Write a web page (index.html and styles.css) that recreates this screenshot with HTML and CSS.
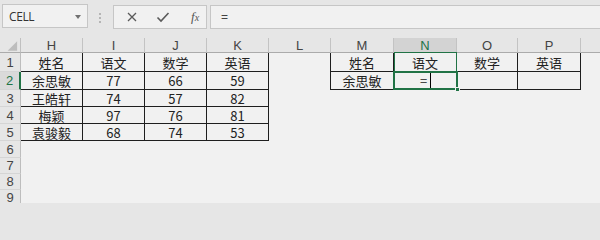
FILE: index.html
```html
<!DOCTYPE html>
<html lang="zh">
<head>
<meta charset="utf-8">
<title>Sheet</title>
<link rel="stylesheet" href="styles.css">
</head>
<body>
<div class="toolbar">
  <div class="namebox"><span class="nb-text">CELL</span><span class="nb-arrow"></span></div>
  <div class="sep"><span></span><span></span><span></span></div>
  <div class="fxbox">
    <svg class="ico" width="12" height="12" viewBox="0 0 12 12"><path d="M2 2 L10 10 M10 2 L2 10" stroke="#5a5a5a" stroke-width="1.3" fill="none"/></svg>
    <svg class="ico" width="14" height="12" viewBox="0 0 14 12"><path d="M1.5 6.5 L5 10 L12.5 2" stroke="#5a5a5a" stroke-width="1.6" fill="none"/></svg>
    <span class="fx"><i>f</i><i class="x">x</i></span>
  </div>
  <div class="formula"><span class="ftext">=</span></div>
</div>
<div class="sheet">
  <div class="corner"><svg width="21" height="15" viewBox="0 0 21 15"><polygon points="18,3 18,13 8,13" fill="#bdbdbd"/></svg></div>
  <div class="ch">H</div><div class="ch">I</div><div class="ch">J</div><div class="ch">K</div><div class="ch">L</div><div class="ch">M</div><div class="ch sel">N</div><div class="ch">O</div><div class="ch">P</div><div class="ch last"></div>

  <div class="rh">1</div>
  <div class="c b">姓名</div><div class="c b">语文</div><div class="c b">数学</div><div class="c b">英语</div><div class="c bl"></div>
  <div class="c b">姓名</div><div class="c b">语文</div><div class="c b">数学</div><div class="c b">英语</div><div class="c"></div>

  <div class="rh rsel">2</div>
  <div class="c b">余思敏</div><div class="c b">77</div><div class="c b">66</div><div class="c b">59</div><div class="c bl"></div>
  <div class="c b">余思敏</div><div class="c b edit"><span>=</span><span class="caret"></span></div><div class="c b"></div><div class="c b"></div><div class="c"></div>

  <div class="rh">3</div>
  <div class="c b">王皓轩</div><div class="c b">74</div><div class="c b">57</div><div class="c b">82</div><div class="c"></div>
  <div class="c"></div><div class="c"></div><div class="c"></div><div class="c"></div><div class="c"></div>

  <div class="rh">4</div>
  <div class="c b">梅颖</div><div class="c b">97</div><div class="c b">76</div><div class="c b">81</div><div class="c"></div>
  <div class="c"></div><div class="c"></div><div class="c"></div><div class="c"></div><div class="c"></div>

  <div class="rh">5</div>
  <div class="c b">袁骏毅</div><div class="c b">68</div><div class="c b">74</div><div class="c b">53</div><div class="c"></div>
  <div class="c"></div><div class="c"></div><div class="c"></div><div class="c"></div><div class="c"></div>

  <div class="rh">6</div>
  <div class="c"></div><div class="c"></div><div class="c"></div><div class="c"></div><div class="c"></div>
  <div class="c"></div><div class="c"></div><div class="c"></div><div class="c"></div><div class="c"></div>

  <div class="rh">7</div>
  <div class="c"></div><div class="c"></div><div class="c"></div><div class="c"></div><div class="c"></div>
  <div class="c"></div><div class="c"></div><div class="c"></div><div class="c"></div><div class="c"></div>

  <div class="rh">8</div>
  <div class="c"></div><div class="c"></div><div class="c"></div><div class="c"></div><div class="c"></div>
  <div class="c"></div><div class="c"></div><div class="c"></div><div class="c"></div><div class="c"></div>

  <div class="rh">9</div>
  <div class="c"></div><div class="c"></div><div class="c"></div><div class="c"></div><div class="c"></div>
  <div class="c"></div><div class="c"></div><div class="c"></div><div class="c"></div><div class="c"></div>

  <div class="ref"></div>
  <div class="active"></div>
  <div class="handle"></div>
</div>
</body>
</html>
```
FILE: styles.css
```css
html, body {
  margin: 0;
  padding: 0;
  width: 600px;
  height: 203px;
  overflow: hidden;
  background: #e6e6e6;
  font-family: "Noto Sans CJK SC", "Liberation Sans", sans-serif;
}

.toolbar {
  height: 38px;
  box-sizing: border-box;
  padding-top: 4px;
  display: flex;
  align-items: flex-start;
  background: #e6e6e6;
}

.namebox {
  margin-left: 2px;
  width: 86px;
  height: 24px;
  box-sizing: border-box;
  border: 1px solid #c6c6c6;
  background: #f1f1f1;
  display: flex;
  align-items: center;
  justify-content: space-between;
  padding: 0 6px 0 6px;
}

.nb-text {
  font-family: "Open Sans", "Liberation Sans", sans-serif;
  font-size: 12px;
  color: #333;
  letter-spacing: -0.4px;
}

.nb-arrow {
  width: 0;
  height: 0;
  border-left: 3.5px solid transparent;
  border-right: 3.5px solid transparent;
  border-top: 4px solid #707070;
  margin-top: 1px;
}

.sep {
  margin-left: 11px;
  margin-top: 9px;
  width: 2px;
  display: flex;
  flex-direction: column;
  gap: 2px;
}

.sep span {
  width: 2px;
  height: 2px;
  background: #b5b5b5;
}

.fxbox {
  margin-left: 12px;
  margin-top: 1px;
  width: 94px;
  height: 24px;
  box-sizing: border-box;
  border: 1px solid #c6c6c6;
  background: #f1f1f1;
  display: flex;
  align-items: center;
  padding-left: 12px;
  gap: 18px;
}

.ico {
  display: block;
}

.fx {
  font-family: "Liberation Serif", serif;
  font-size: 13px;
  color: #555;
  margin-left: 3px;
}

.fx .x {
  font-size: 10px;
}

.formula {
  margin-left: 3px;
  margin-top: 1px;
  flex: 1;
  height: 24px;
  box-sizing: border-box;
  border: 1px solid #c6c6c6;
  border-right: none;
  background: #f1f1f1;
  display: flex;
  align-items: center;
  padding-left: 10px;
}

.ftext {
  font-family: "Liberation Sans", sans-serif;
  font-size: 12px;
  color: #444;
}

.sheet {
  position: relative;
  display: grid;
  grid-template-columns: 21px 62px 62px 62px 62px 62px 63px 63px 61px 63px 1fr;
  grid-template-rows: 15px 19px 18px 17px 17px 17px 17px 16px 16px 16px;
}

.sheet > div {
  box-sizing: border-box;
  display: flex;
  align-items: center;
  justify-content: center;
}

.corner {
  background: #e6e6e6;
  border-right: 1px solid #c0c0c0;
  border-bottom: 1px solid #ababab;
}

.corner svg {
  display: block;
}

.ch {
  background: #e6e6e6;
  border-right: 1px solid #c3c3c3;
  border-bottom: 1px solid #ababab;
  font-family: "Liberation Sans", sans-serif;
  font-size: 13px;
  line-height: 1;
  color: #444;
}

.ch.sel {
  background: #d3d3d3;
  color: #217346;
}

.ch.last {
  border-right: none;
}

.rh {
  background: #e6e6e6;
  border-right: 1px solid #bdbdbd;
  border-bottom: 1px solid #d5d5d5;
  font-family: "Liberation Sans", sans-serif;
  font-size: 13px;
  line-height: 1;
  color: #444;
}

.rh.rsel {
  background: #dadada;
  border-right: 2px solid #217346;
  color: #217346;
}

.c {
  background: #f1f1f1;
  font-size: 13px;
  color: #222;
  line-height: 1;
}

.c.b {
  border-right: 1px solid #1e1e1e;
  border-bottom: 1px solid #1e1e1e;
}

.c.bl {
  border-right: 1px solid #1e1e1e;
}

.edit {
  gap: 3px;
  padding-left: 1px;
}

.caret {
  display: inline-block;
  width: 1px;
  height: 15px;
  background: #000;
}

.ref {
  position: absolute;
  left: 394px;
  top: 14px;
  width: 63px;
  height: 20px;
  box-sizing: border-box;
  border: 1px solid #217346;
}

.active {
  position: absolute;
  left: 393px;
  top: 33px;
  width: 65px;
  height: 19px;
  box-sizing: border-box;
  border: 2px solid #217346;
}

.handle {
  position: absolute;
  left: 455px;
  top: 49px;
  width: 5px;
  height: 5px;
  box-sizing: border-box;
  background: #217346;
  border: 1px solid #f1f1f1;
}
```
